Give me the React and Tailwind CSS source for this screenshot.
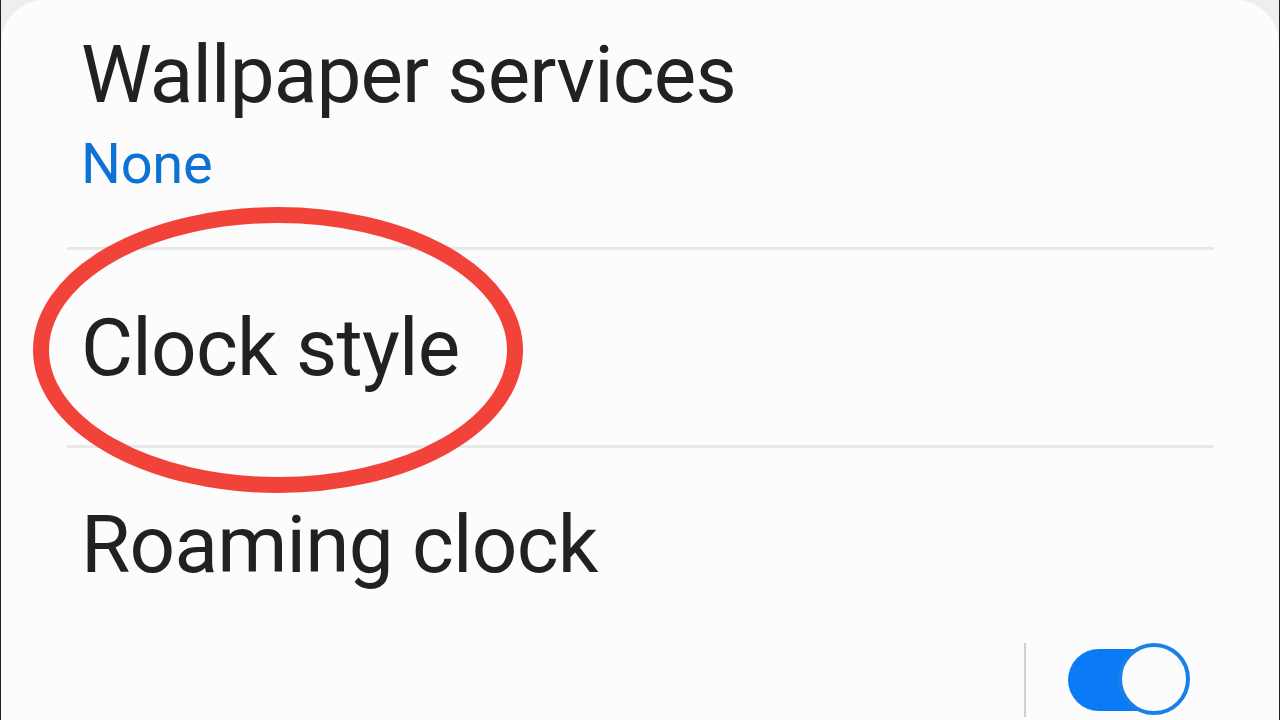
import React from "react";

function Divider() {
  return <div className="ml-[66px] h-[3px] w-[1147px] bg-[#e8e8e8]" />;
}

function Toggle() {
  return (
    <div className="flex items-center">
      <div className="h-[74px] w-[2px] bg-[#d0d0d0]" />
      <div className="relative ml-[42px] h-[74px] w-[122px]">
        <div className="absolute left-0 top-[6px] h-[62px] w-[110px] rounded-full bg-[#0b7bf5]" />
        <div className="absolute right-0 top-0 size-[72px] rounded-full border-[4px] border-[#1a7fe8] bg-[#fcfcfc]" />
      </div>
    </div>
  );
}

export default function App() {
  return (
    <div className="h-[720px] w-[1280px] overflow-hidden bg-[#202020] px-[1px]">
      <div className="h-full bg-[#eeeeee]">
        <div
          className="relative h-full overflow-hidden rounded-t-[44px] bg-[#fcfcfc] text-[#212121]"
          style={{ fontFamily: "Roboto, 'Liberation Sans', sans-serif" }}
        >
          <div className="pl-[80px] pt-[35px]">
            <div className="text-[80px] leading-none tracking-[-0.85px]">Wallpaper services</div>
            <div className="mt-[21px] text-[56px] leading-none tracking-[-0.3px] text-[#0d72d3]">None</div>
          </div>
          <div className="mt-[55px]">
            <Divider />
          </div>
          <div className="mt-[58px] pl-[80px] text-[80px] leading-none tracking-[-0.75px]">Clock style</div>
          <div className="mt-[57px]">
            <Divider />
          </div>
          <div className="mt-[57px] pl-[80px] text-[80px] leading-none tracking-[-0.75px]">Roaming clock</div>
          <div className="mt-[58px] flex justify-end pr-[89px]">
            <Toggle />
          </div>

          {/* red annotation circle */}
          <svg
            className="pointer-events-none absolute left-0 top-0"
            width="1278"
            height="720"
            viewBox="0 0 1278 720"
          >
            <ellipse
              cx="277"
              cy="350"
              rx="237"
              ry="135"
              fill="none"
              stroke="#f2433a"
              strokeWidth="16"
            />
          </svg>
        </div>
      </div>
    </div>
  );
}
